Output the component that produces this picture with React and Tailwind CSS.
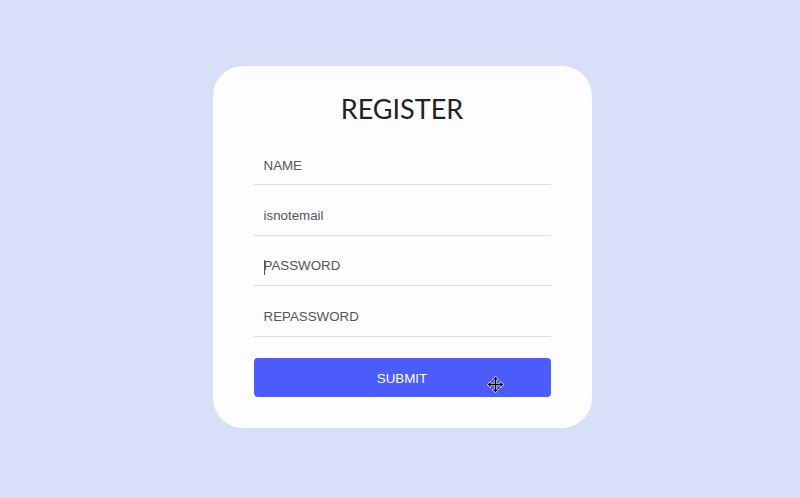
import { useState } from "react";

function Field({ placeholder, value, caret }) {
  return (
    <div className="relative h-[50.4px] border-b border-[#dcdcdc] flex items-center pt-[12px]">
      {caret && <span className="absolute left-[10px] top-[24px] w-px h-[15px] bg-[#555]"></span>}
      <input
        className="w-full bg-transparent outline-none pl-[10px] text-[13.33px] text-[#555] placeholder:text-[#555] font-['Liberation_Sans',Arial,sans-serif]"
        placeholder={placeholder}
        defaultValue={value}
      />
    </div>
  );
}

export default function App() {
  const [sent, setSent] = useState(false);

  return (
    <div className="h-[498px] w-full bg-[#d7e0f6] flex items-center justify-center pl-[4px] pb-[4px]">
      <div className="w-[379px] h-[362px] rounded-[30px] bg-[#fdfcff] px-[41px] pt-[26px] pb-[31px] flex flex-col">
        <h1 className="text-center text-[27px] leading-[34px] text-[#222] font-['Lato',sans-serif]">
          REGISTER
        </h1>
        <div className="mt-[9px] flex flex-col">
          <Field placeholder="NAME" />
          <Field value="isnotemail" />
          <Field placeholder="PASSWORD" caret />
          <Field placeholder="REPASSWORD" />
        </div>
        {/* nút submit */}
        <button
          onClick={() => setSent(!sent)}
          className="relative mt-[21px] h-[40px] w-full rounded-[4px] bg-[#4c5cfb] pt-[3px] text-white text-[13.33px] font-['Liberation_Sans',Arial,sans-serif]"
        >
          SUBMIT
          <svg
            className="absolute left-[233px] top-[18px] w-[17px] h-[17px]"
            viewBox="0 0 24 24"
          >
            <path
              d="M12 1l4 4h-3v6h6V8l4 4-4 4v-3h-6v6h3l-4 4-4-4h3v-6H5v3l-4-4 4-4v3h6V5H8z"
              fill="#000"
              stroke="#fff"
              strokeWidth="1.5"
              strokeLinejoin="round"
              paintOrder="stroke"
            />
          </svg>
        </button>
      </div>
    </div>
  );
}
